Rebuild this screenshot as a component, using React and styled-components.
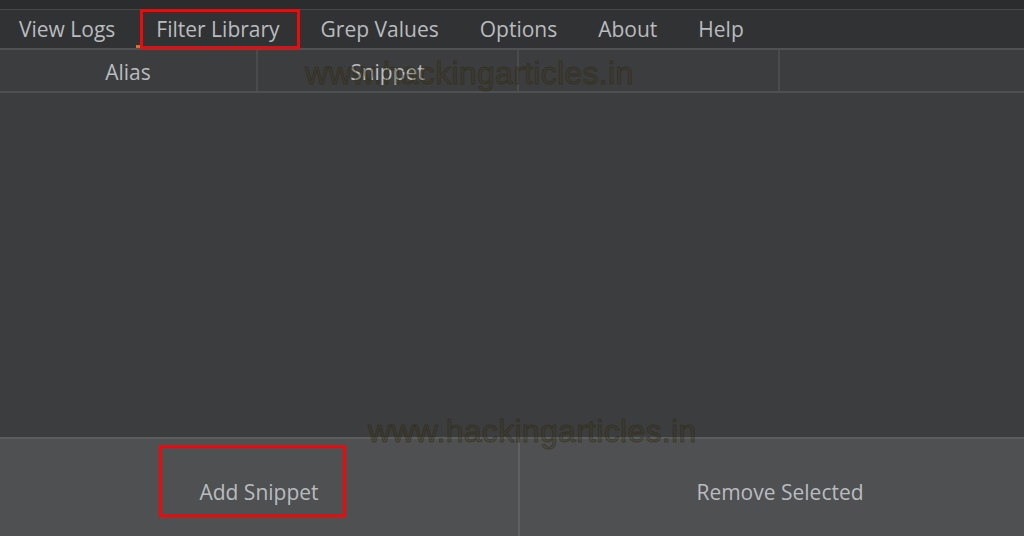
import styled, { createGlobalStyle } from "styled-components";

const GlobalStyle = createGlobalStyle`
  html, body {
    margin: 0;
    padding: 0;
    background: #2b2b2b;
  }
  * { box-sizing: border-box; }
`;

const Window = styled.div`
  position: relative;
  width: 1024px;
  height: 536px;
  display: flex;
  flex-direction: column;
  overflow: hidden;
  font-family: "Open Sans", "Noto Sans", sans-serif;
  color: #bbbcbd;
  background: #2b2b2b;
`;

const TopStrip = styled.div`
  height: 10px;
  background: #2b2c2e;
  border-bottom: 1px solid #474849;
`;

const TabBar = styled.div`
  height: 40px;
  display: flex;
  align-items: stretch;
  background: #313234;
  border-bottom: 2px solid #505153;
`;

const Tab = styled.div`
  position: relative;
  display: flex;
  align-items: center;
  padding: 0 20.5px 1px ${(p) => p.$left || 20.5}px;
  font-size: 21px;
  color: #b9bcbe;
  white-space: nowrap;
  ${(p) =>
    p.$active &&
    `
    &::before {
      content: "";
      position: absolute;
      left: 0;
      width: 5px;
      bottom: 0;
      height: 3px;
      background: #d8702f;
    }
  `}
`;

const Highlight = styled.div`
  position: absolute;
  left: ${(p) => p.$x}px;
  top: ${(p) => p.$y}px;
  width: ${(p) => p.$w}px;
  height: ${(p) => p.$h}px;
  border: 3px solid #ee0a0a;
  pointer-events: none;
`;

const Table = styled.div`
  flex: 1;
  display: flex;
  flex-direction: column;
  background: #3c3d3f;
`;

const HeaderRow = styled.div`
  height: 43px;
  display: grid;
  grid-template-columns: 258px 261px 261px 1fr;
  border-bottom: 2px solid #4f5052;
`;

const HeaderCell = styled.div`
  display: flex;
  align-items: center;
  justify-content: center;
  padding-top: 3px;
  font-size: 21px;
  color: #b9bcbe;
  border-right: ${(p) => (p.$last ? "none" : "2px solid #4a4b4d")};
`;

const Body = styled.div`
  flex: 1;
`;

const ButtonRow = styled.div`
  height: 99px;
  display: grid;
  grid-template-columns: 518px 1fr;
  background: #4e5052;
  border-top: 2px solid #5b5d5f;
`;

const ActionButton = styled.div`
  position: relative;
  display: flex;
  align-items: center;
  justify-content: center;
  padding-top: 9px;
  padding-left: ${(p) => (p.$divider ? 16 : 0)}px;
  font-size: 21px;
  color: #b9bcbe;
  border-left: ${(p) => (p.$divider ? "2px solid #5e6062" : "none")};
`;

const Watermark = styled.div`
  position: absolute;
  left: ${(p) => p.$x}px;
  top: ${(p) => p.$y}px;
  font-family: "Liberation Sans", Arial, sans-serif;
  font-size: 32px;
  letter-spacing: 0.3px;
  color: rgba(62, 56, 22, 0.3);
  -webkit-text-stroke: 1px rgba(40, 34, 0, 0.4);
  white-space: nowrap;
  pointer-events: none;
`;

const tabs = [
  { label: "View Logs", left: 19 },
  { label: "Filter Library", active: true },
  { label: "Grep Values" },
  { label: "Options" },
  { label: "About" },
  { label: "Help" },
];

export default function App() {
  return (
    <>
      <GlobalStyle />
      <Window>
        <TopStrip />
        <TabBar>
          {tabs.map((t) => (
            <Tab key={t.label} $left={t.left} $active={t.active}>
              {t.label}
            </Tab>
          ))}
        </TabBar>
        <Table>
          <HeaderRow>
            <HeaderCell>Alias</HeaderCell>
            <HeaderCell>Snippet</HeaderCell>
            <HeaderCell />
            <HeaderCell $last />
          </HeaderRow>
          <Body />
        </Table>
        <ButtonRow>
          <ActionButton>Add Snippet</ActionButton>
          <ActionButton $divider>Remove Selected</ActionButton>
        </ButtonRow>

        <Watermark $x={305} $y={55}>www.hackingarticles.in</Watermark>
        <Watermark $x={368} $y={413}>www.hackingarticles.in</Watermark>

        <Highlight $x={140} $y={9} $w={160} $h={40} />
        <Highlight $x={159} $y={445} $w={187} $h={72} />
      </Window>
    </>
  );
}
